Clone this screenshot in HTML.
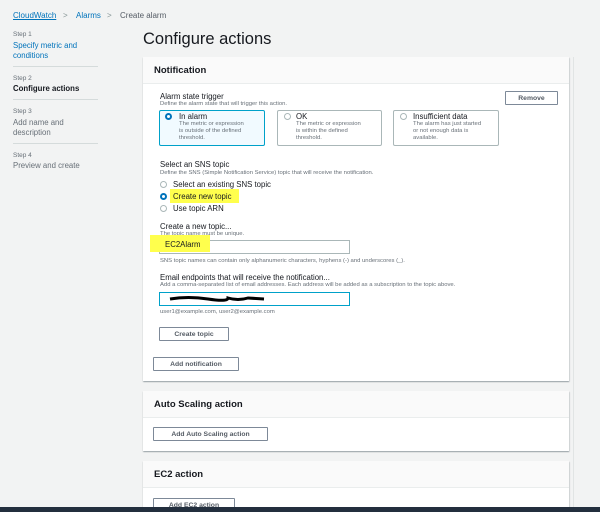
<!DOCTYPE html>
<html><head><style>
*{margin:0;padding:0;box-sizing:border-box}
html,body{width:600px;height:512px;overflow:hidden}
body{background:#f2f3f3;font-family:"Liberation Sans",sans-serif;color:#16191f;position:relative}
.a{position:absolute;white-space:nowrap}
.s{font-size:6.5px;color:#687078}
.lk{color:#0073bb}
.hr{position:absolute;left:13px;width:85px;height:1px;background:#d5dbdb}
.panel{position:absolute;left:143px;width:426px;background:#fff;box-shadow:0 1px 1px rgba(0,28,36,.3),1px 1px 1px rgba(0,28,36,.1)}
.ph{height:27px;background:#fafafa;border-bottom:1px solid #eaeded;font-weight:bold;font-size:9.5px;padding:8px 11px}
.btn{position:absolute;border:1px solid #7d8998;background:#fff;font-weight:bold;font-size:6.8px;color:#545b64;display:flex;align-items:center;justify-content:center;border-radius:1px}
.tile{position:absolute;top:110px;height:36px;border:1px solid #aab7b8;border-radius:2px;background:#fff}
.rad{position:absolute;width:7px;height:7px;border-radius:50%;border:1px solid #aab7b8;background:#fff}
.rad.on{border:2px solid #0073bb}
.t8{font-size:7.8px}
.d{font-size:5.9px;color:#687078;line-height:7px}
.hl{position:absolute;background:#ffff4d}
</style></head><body>
<div class="a lk" style="left:13px;top:11px;font-size:8px;text-decoration:underline">CloudWatch</div>
<div class="a" style="left:63px;top:11px;font-size:8px;color:#879596">&gt;</div>
<div class="a lk" style="left:76px;top:11px;font-size:8px">Alarms</div>
<div class="a" style="left:107px;top:11px;font-size:8px;color:#879596">&gt;</div>
<div class="a" style="left:120px;top:11px;font-size:8px;color:#545b64">Create alarm</div>

<div class="a s" style="left:13px;top:31px">Step 1</div>
<div class="a lk" style="left:13px;top:41px;font-size:7.8px;line-height:9.5px">Specify metric and<br>conditions</div>
<div class="hr" style="top:66px"></div>
<div class="a s" style="left:13px;top:75px">Step 2</div>
<div class="a" style="left:13px;top:84px;font-size:7.8px;font-weight:bold">Configure actions</div>
<div class="hr" style="top:99px"></div>
<div class="a s" style="left:13px;top:108px">Step 3</div>
<div class="a" style="left:13px;top:118px;font-size:7.8px;line-height:9.5px;color:#687078">Add name and<br>description</div>
<div class="hr" style="top:143px"></div>
<div class="a s" style="left:13px;top:152px">Step 4</div>
<div class="a" style="left:13px;top:161px;font-size:7.8px;color:#687078">Preview and create</div>

<div class="a" style="left:143px;top:30px;font-size:16.5px;color:#16191f">Configure actions</div>
<div style="position:absolute;left:573px;top:57px;width:1px;height:455px;background:#e1e4e4"></div>

<div class="panel" style="top:57px;height:324px">
<div class="ph">Notification</div>
</div>
<div class="a t8" style="left:160px;top:92px">Alarm state trigger</div>
<div class="a d" style="left:160px;top:101px">Define the alarm state that will trigger this action.</div>
<div class="btn" style="left:505px;top:91px;width:53px;height:14px">Remove</div>
<div class="tile" style="left:159px;width:106px;border-color:#00a1c9;background:#f1faff"></div>
<div class="tile" style="left:277px;width:105px"></div>
<div class="tile" style="left:393px;width:106px"></div>
<div class="rad on" style="left:165px;top:113px"></div>
<div class="rad" style="left:284px;top:113px"></div>
<div class="rad" style="left:400px;top:113px"></div>
<div class="a t8" style="left:179px;top:112px">In alarm</div>
<div class="a d" style="left:179px;top:121px">The metric or expression<br>is outside of the defined<br>threshold.</div>
<div class="a t8" style="left:296px;top:112px">OK</div>
<div class="a d" style="left:296px;top:121px">The metric or expression<br>is within the defined<br>threshold.</div>
<div class="a t8" style="left:413px;top:112px">Insufficient data</div>
<div class="a d" style="left:413px;top:121px">The alarm has just started<br>or not enough data is<br>available.</div>

<div class="a t8" style="left:160px;top:160px">Select an SNS topic</div>
<div class="a d" style="left:160px;top:170px">Define the SNS (Simple Notification Service) topic that will receive the notification.</div>
<div class="hl" style="left:170px;top:189px;width:69px;height:14px"></div>
<div class="rad" style="left:160px;top:181px"></div>
<div class="rad on" style="left:160px;top:193px"></div>
<div class="rad" style="left:160px;top:205px"></div>
<div class="a t8" style="left:173px;top:180px">Select an existing SNS topic</div>
<div class="a t8" style="left:173px;top:192px">Create new topic</div>
<div class="a t8" style="left:173px;top:204px">Use topic ARN</div>

<div class="a t8" style="left:160px;top:222px">Create a new topic...</div>
<div class="a d" style="left:160px;top:231px">The topic name must be unique.</div>
<div style="position:absolute;left:159px;top:240px;width:191px;height:14px;border:1px solid #aab7b8;background:#fff"></div>
<div class="hl" style="left:150px;top:235px;width:60px;height:17px"></div>
<div class="a t8" style="left:165px;top:240px">EC2Alarm</div>
<div class="a d" style="left:160px;top:258px">SNS topic names can contain only alphanumeric characters, hyphens (-) and underscores (_).</div>
<div class="a t8" style="left:160px;top:273px">Email endpoints that will receive the notification...</div>
<div class="a d" style="left:160px;top:282px">Add a comma-separated list of email addresses. Each address will be added as a subscription to the topic above.</div>
<div style="position:absolute;left:159px;top:292px;width:191px;height:14px;border:1px solid #00a1c9;background:#fff"></div>
<svg style="position:absolute;left:168px;top:293px" width="100" height="12"><path d="M2 6 Q20 3 40 6 T60 5 Q70 8 80 5 L96 6" stroke="#000" stroke-width="3" fill="none"/></svg>
<div class="a d" style="left:160px;top:309px">user1@example.com, user2@example.com</div>
<div class="btn" style="left:159px;top:327px;width:70px;height:14px">Create topic</div>
<div class="btn" style="left:153px;top:357px;width:86px;height:14px">Add notification</div>

<div class="panel" style="top:391px;height:60px"><div class="ph">Auto Scaling action</div></div>
<div class="btn" style="left:153px;top:427px;width:115px;height:14px">Add Auto Scaling action</div>
<div class="panel" style="top:461px;height:51px"><div class="ph">EC2 action</div></div>
<div class="btn" style="left:153px;top:498px;width:82px;height:14px">Add EC2 action</div>
<div style="position:absolute;left:0;top:507px;width:600px;height:5px;background:#232f3e"></div>
</body></html>
